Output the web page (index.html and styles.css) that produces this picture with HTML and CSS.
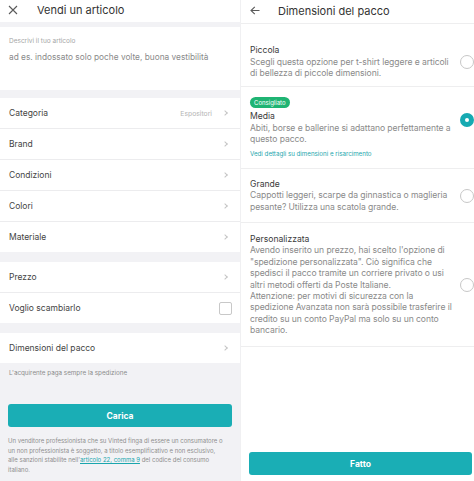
FILE: index.html
```html
<!DOCTYPE html>
<html lang="it">
<head>
<meta charset="utf-8">
<link rel="stylesheet" href="styles.css">
</head>
<body>
<div class="screens">
  <section class="panel left">
    <header class="topbar">
      <svg class="ico-x" width="10" height="10" viewBox="0 0 10 10"><path d="M1 1L9 9M9 1L1 9" stroke="#5a5a5a" stroke-width="1.1" fill="none"/></svg>
      <h1 class="title">Vendi un articolo</h1>
    </header>
    <div class="desc-block">
      <div class="desc-label">Descrivi il tuo articolo</div>
      <div class="desc-ph">ad es. indossato solo poche volte, buona vestibilità</div>
    </div>
    <div class="group">
      <div class="row"><span class="row-label">Categoria</span><span class="row-value">Espositori</span><span class="chev"></span></div>
      <div class="row"><span class="row-label">Brand</span><span class="chev"></span></div>
      <div class="row"><span class="row-label">Condizioni</span><span class="chev"></span></div>
      <div class="row"><span class="row-label">Colori</span><span class="chev"></span></div>
      <div class="row"><span class="row-label">Materiale</span><span class="chev"></span></div>
    </div>
    <div class="group">
      <div class="row"><span class="row-label">Prezzo</span><span class="chev"></span></div>
      <div class="row"><span class="row-label">Voglio scambiarlo</span><span class="checkbox"></span></div>
    </div>
    <div class="group">
      <div class="row"><span class="row-label">Dimensioni del pacco</span><span class="chev"></span></div>
    </div>
    <div class="note">L'acquirente paga sempre la spedizione</div>
    <button class="btn btn-left">Carica</button>
    <p class="legal">Un venditore professionista che su Vinted finga di essere un consumatore o<br>un non professionista è soggetto, a titolo esemplificativo e non esclusivo,<br>alle sanzioni stabilite nell'<a class="legal-link">articolo 22, comma 9</a> del codice del consumo<br>italiano.</p>
  </section>

  <section class="panel right">
    <header class="topbar topbar-r">
      <svg class="ico-back" width="10" height="9" viewBox="0 0 10 9"><path d="M9.5 4.5H1M4.8 0.8L1 4.5L4.8 8.2" stroke="#5a5a5a" stroke-width="1.1" fill="none"/></svg>
      <h1 class="title">Dimensioni del pacco</h1>
    </header>
    <div class="opt opt-piccola">
      <div class="opt-text">
        <div class="opt-name">Piccola</div>
        <div class="opt-desc">Scegli questa opzione per t-shirt leggere e articoli di bellezza di piccole dimensioni.</div>
      </div>
      <span class="radio"></span>
    </div>
    <div class="opt opt-media">
      <div class="opt-text">
        <span class="badge">Consigliato</span>
        <div class="opt-name">Media</div>
        <div class="opt-desc">Abiti, borse e ballerine si adattano perfettamente a questo pacco.</div>
        <div class="opt-link">Vedi dettagli su dimensioni e risarcimento</div>
      </div>
      <span class="radio radio-on"></span>
    </div>
    <div class="opt opt-grande">
      <div class="opt-text">
        <div class="opt-name">Grande</div>
        <div class="opt-desc">Cappotti leggeri, scarpe da ginnastica o maglieria pesante? Utilizza una scatola grande.</div>
      </div>
      <span class="radio"></span>
    </div>
    <div class="opt opt-pers">
      <div class="opt-text">
        <div class="opt-name">Personalizzata</div>
        <div class="opt-desc">Avendo inserito un prezzo, hai scelto l'opzione di "spedizione personalizzata". Ciò significa che spedisci il pacco tramite un corriere privato o usi altri metodi offerti da Poste Italiane.<br>Attenzione: per motivi di sicurezza con la spedizione Avanzata non sarà possibile trasferire il credito su un conto PayPal ma solo su un conto bancario.</div>
      </div>
      <span class="radio"></span>
    </div>
    <div class="spacer"></div>
    <button class="btn btn-right">Fatto</button>
  </section>
</div>
</body>
</html>
```

FILE: styles.css
```css
* { box-sizing: border-box; }
html, body { margin: 0; padding: 0; }
body {
  width: 474px;
  height: 481px;
  overflow: hidden;
  font-family: Inter, "Open Sans", "Liberation Sans", sans-serif;
  background: #ffffff;
  color: #3c3c3c;
}
.screens {
  display: flex;
  height: 481px;
}
.panel {
  height: 481px;
  display: flex;
  flex-direction: column;
}
.left {
  width: 240px;
  background: #f2f2f5;
}
.right {
  width: 234px;
  background: #ffffff;
  border-left: 1px solid #f0f0f2;
}
.topbar {
  height: 22px;
  background: #ffffff;
  display: flex;
  align-items: center;
  padding: 0 0 3px 8px;
  flex: none;
}
.topbar-r {
  height: 24px;
  border-bottom: 1px solid #eeeeef;
  padding: 0 0 2px 9px;
}
.title {
  margin: 0 0 0 19px;
  font-size: 11px;
  font-weight: 400;
  color: #333333;
}
.topbar-r .title { margin-left: 18px; }
.desc-block {
  margin-top: 5px;
  background: #ffffff;
  height: 63px;
  padding: 10px 9px 0;
  flex: none;
}
.desc-label {
  font-size: 6.5px;
  line-height: 9px;
  color: #a6a6a6;
}
.desc-ph {
  margin-top: 6px;
  font-size: 8.3px;
  line-height: 10px;
  color: #8a8a8a;
}
.group {
  margin-top: 8px;
  background: #ffffff;
  flex: none;
}
.group + .group { margin-top: 10px; }
.row {
  height: 31px;
  display: flex;
  align-items: center;
  padding: 0 12px 0 9px;
  border-bottom: 1px solid #ececee;
}
.row:last-child { border-bottom: none; height: 30px; }
.row-label {
  flex: 1;
  font-size: 8.5px;
  color: #444444;
}
.row-value {
  font-size: 6.8px;
  color: #b4b4b4;
  margin-right: 11px;
}
.chev {
  width: 4px;
  height: 4px;
  border-top: 1px solid #c4c4c4;
  border-right: 1px solid #c4c4c4;
  transform: rotate(45deg);
  margin-right: 1px;
}
.checkbox {
  width: 13px;
  height: 13px;
  border: 1px solid #c8c8c8;
  border-radius: 2px;
  margin-right: -4px;
  background: #fff;
}
.note {
  padding: 6px 9px 0;
  font-size: 6.3px;
  line-height: 9px;
  color: #8c8c8c;
  flex: none;
}
.btn {
  display: block;
  border: none;
  border-radius: 3px;
  background: #1aaeb5;
  color: #ffffff;
  font-family: inherit;
  font-weight: 700;
  font-size: 8.5px;
  height: 23px;
  padding: 0;
  flex: none;
}
.btn-left {
  margin: 26px 8px 0;
  width: 224px;
}
.legal {
  margin: 9px 8px 0;
  font-size: 6px;
  line-height: 9.7px;
  color: #8e8e8e;
  white-space: nowrap;
}
.legal-link {
  color: #1aa6ad;
  text-decoration: underline;
}
.opt {
  display: flex;
  align-items: center;
  border-bottom: 1px solid #eeeeef;
  padding-left: 9px;
  flex: none;
}
.opt-text {
  flex: 1;
  min-width: 0;
}
.opt-name {
  font-size: 8.6px;
  line-height: 11.5px;
  color: #3a3a3a;
}
.opt-desc {
  font-size: 8.6px;
  line-height: 11.4px;
  color: #8a8a8a;
  letter-spacing: -0.08px;
}
.opt-piccola { padding-top: 21px; padding-bottom: 7px; }
.opt-media { padding-top: 10px; padding-bottom: 9px; align-items: flex-start; }
.opt-media .radio { margin-top: 16px; }
.opt-grande { padding-top: 10px; padding-bottom: 9px; }
.opt-pers { padding-top: 11px; padding-bottom: 9px; }
.badge {
  display: block;
  width: fit-content;
  background: #1fb473;
  color: #ffffff;
  font-size: 6px;
  line-height: 11px;
  height: 11px;
  padding: 0 4px;
  border-radius: 6px;
  margin-bottom: 3px;
}
.opt-link {
  font-size: 6.2px;
  line-height: 10px;
  color: #1aa6ad;
  margin-top: 3px;
}
.radio {
  flex: none;
  width: 14px;
  height: 14px;
  border: 1px solid #c7c7c7;
  border-radius: 50%;
  margin-left: 2px;
  background: #fff;
}
.radio-on {
  border: 5px solid #16aab2;
  background: #ffffff;
}
.spacer { flex: 1; }
.btn-right {
  margin: 0 2px 6px 8px;
  width: 223px;
}
```
